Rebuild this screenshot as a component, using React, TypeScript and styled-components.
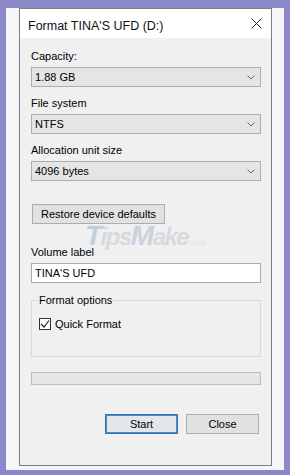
import React from "react";
import styled, { createGlobalStyle } from "styled-components";

const GlobalStyle = createGlobalStyle`
  html, body {
    margin: 0;
    padding: 0;
    background: #8a88c9;
  }
  body {
    font-family: "Liberation Sans", Arial, sans-serif;
    font-size: 11px;
    color: #000;
  }
`;

const Chevron = () => (
  <svg width="8" height="5" viewBox="0 0 8 5">
    <polyline points="0.5,0.5 4,4 7.5,0.5" fill="none" stroke="#666" strokeWidth="1" />
  </svg>
);

const CloseIcon = () => (
  <svg width="11" height="11" viewBox="0 0 11 11">
    <path d="M0.5 0.5 L10.5 10.5 M10.5 0.5 L0.5 10.5" stroke="#222" strokeWidth="1" />
  </svg>
);

// the site watermark that sits over the dialog
const WatermarkLogo = () => (
  <svg width="150" height="40" viewBox="0 0 150 40">
    <text
      x="1"
      y="30"
      fontFamily="Liberation Sans, Arial, sans-serif"
      fontWeight="bold"
      fontStyle="italic"
      fontSize="24"
      letterSpacing="-1.5"
      fill="#d3d8df"
    >
      <tspan fontSize="28" fill="#bccbdc">T</tspan>
      <tspan>ips</tspan>
      <tspan fontSize="28" fill="#c6d0dc">M</tspan>
      <tspan>ake</tspan>
      <tspan fontSize="8" fontWeight="normal" letterSpacing="0" fill="#dcdfe4">.com</tspan>
    </text>
  </svg>
);

type DropdownProps = {
  label: string;
  value: string;
};

const Dropdown = (props: DropdownProps) => {
  return (
    <Field>
      <Label>{props.label}</Label>
      <Select>
        <span>{props.value}</span>
        <Chevron />
      </Select>
    </Field>
  );
};

const App = () => {
  return (
    <>
      <GlobalStyle />
      <Frame>
        <Window>
          <TitleBar>
            <Title>Format TINA'S UFD (D:)</Title>
            <CloseButton>
              <CloseIcon />
            </CloseButton>
          </TitleBar>
          <Content>
            <Dropdown label="Capacity:" value="1.88 GB" />
            <Dropdown label="File system" value="NTFS" />
            <Dropdown label="Allocation unit size" value="4096 bytes" />

            <RestoreButton>Restore device defaults</RestoreButton>

            <VolumeLabel>Volume label</VolumeLabel>
            <TextInput>TINA'S UFD</TextInput>

            <GroupBox>
              <Legend>Format options</Legend>
              <CheckRow>
                <CheckBox>
                  <svg width="10" height="10" viewBox="0 0 10 10">
                    <polyline points="1,5 4,8 9,1.5" fill="none" stroke="#222" strokeWidth="1.2" />
                  </svg>
                </CheckBox>
                Quick Format
              </CheckRow>
            </GroupBox>

            <Progress />

            <ButtonRow>
              <DialogButton $primary>Start</DialogButton>
              <DialogButton>Close</DialogButton>
            </ButtonRow>
          </Content>

          <Watermark>
            <WatermarkLogo />
          </Watermark>
        </Window>
      </Frame>
    </>
  );
};

export default App;

const Frame = styled.div`
  margin: 8px 6px 0 6px;
  width: 278px;
  height: 462px;
  background: #f6f6fa;
  padding-left: 13px;
  box-sizing: border-box;
`;

const Window = styled.div`
  position: relative;
  width: 253px;
  height: 458px;
  box-sizing: border-box;
  border: 1px solid #7d7d7d;
  background: #f0f0f0;
  display: flex;
  flex-direction: column;
  overflow: hidden;
`;

const TitleBar = styled.div`
  height: 29px;
  background: #fff;
  display: flex;
  align-items: center;
  justify-content: space-between;
  padding: 0 9px 0 8px;
`;

const Title = styled.div`
  font-size: 12.5px;
  padding-top: 4px;
  color: #111;
`;

const CloseButton = styled.div`
  display: flex;
  align-items: center;
  margin-top: -1px;
`;

const Content = styled.div`
  display: flex;
  flex-direction: column;
  padding: 11px 10px 0 11px;
`;

const Field = styled.div`
  display: flex;
  flex-direction: column;
  margin-bottom: 9px;
`;

const Label = styled.div`
  line-height: 15px;
  height: 15px;
  margin-bottom: 3px;
`;

const Select = styled.div`
  height: 20px;
  box-sizing: border-box;
  border: 1px solid #acacac;
  background: #e5e5e5;
  display: flex;
  align-items: center;
  justify-content: space-between;
  padding: 0 5px 0 3px;
`;

const RestoreButton = styled.div`
  align-self: flex-start;
  margin: 14px 0 0 1px;
  width: 133px;
  height: 20px;
  box-sizing: border-box;
  border: 1px solid #adadad;
  background: #e1e1e1;
  display: flex;
  align-items: center;
  justify-content: center;
`;

const VolumeLabel = styled(Label)`
  margin-top: 21px;
`;

const TextInput = styled.div`
  height: 20px;
  box-sizing: border-box;
  border: 1px solid #a9a9a9;
  background: #fff;
  display: flex;
  align-items: center;
  padding-left: 3px;
`;

const GroupBox = styled.fieldset`
  margin: 10px 0 0 0;
  padding: 8px 0 25px 6px;
  border: 1px solid #d9d9d9;
  min-inline-size: 0;
`;

const Legend = styled.legend`
  padding: 0 1px;
  line-height: 15px;
  height: 15px;
`;

const CheckRow = styled.div`
  display: flex;
  align-items: center;
  height: 15px;
  padding-left: 1px;
  gap: 4px;
`;

const CheckBox = styled.span`
  width: 12px;
  height: 12px;
  box-sizing: border-box;
  border: 1px solid #333;
  background: #fff;
  display: flex;
  align-items: center;
  justify-content: center;
`;

const Progress = styled.div`
  margin-top: 15px;
  height: 13px;
  box-sizing: border-box;
  border: 1px solid #bcbcbc;
  background: #e6e6e6;
`;

const ButtonRow = styled.div`
  display: flex;
  justify-content: flex-end;
  gap: 8px;
  margin-top: 29px;
  padding-right: 2px;
`;

const DialogButton = styled.div<{ $primary?: boolean }>`
  width: 73px;
  height: 20px;
  box-sizing: border-box;
  display: flex;
  align-items: center;
  justify-content: center;
  background: ${(p) => (p.$primary ? "#e3e7eb" : "#e1e1e1")};
  border: 1px solid ${(p) => (p.$primary ? "#2f74b0" : "#adadad")};
  box-shadow: ${(p) => (p.$primary ? "inset 0 0 0 1px #4f8cc2" : "none")};
`;

const Watermark = styled.div`
  position: absolute;
  left: 64px;
  top: 206px;
  display: flex;
  opacity: 0.9;
  pointer-events: none;
`;
